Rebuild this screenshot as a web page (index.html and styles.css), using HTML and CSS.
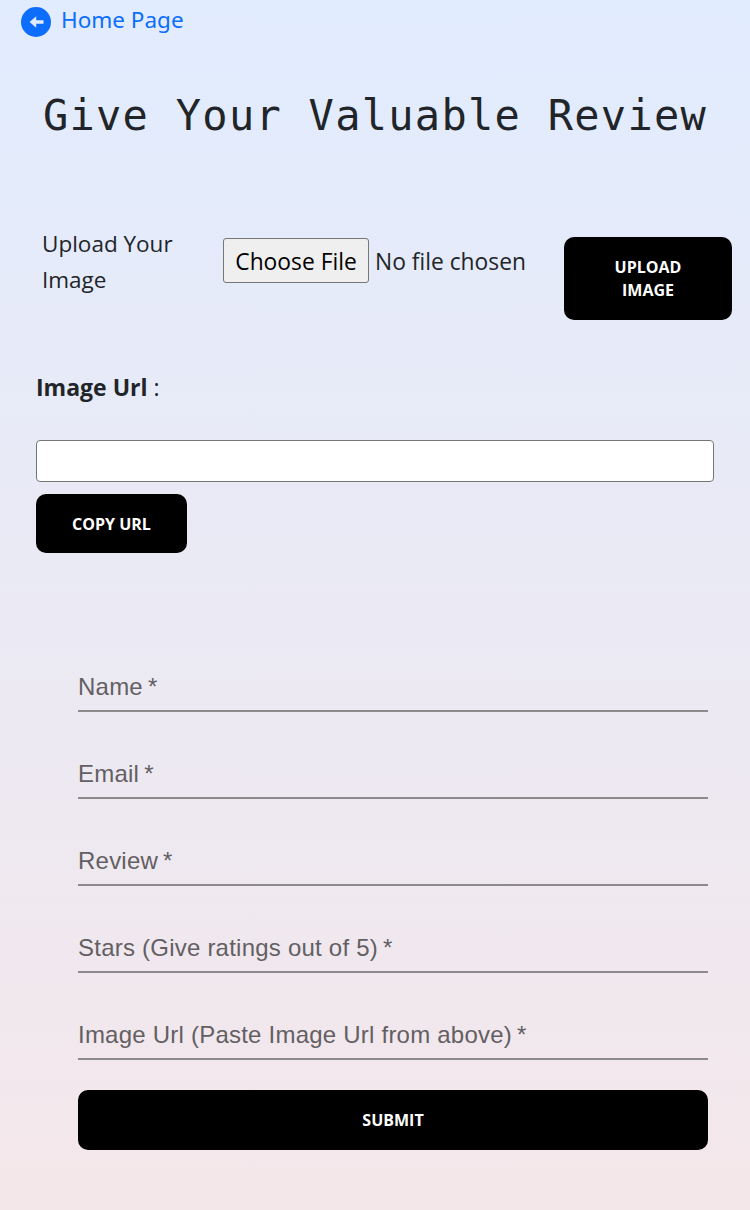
FILE: index.html
```html
<!DOCTYPE html>
<html lang="en">
<head>
    <meta charset="UTF-8">
    <meta name="viewport" content="width=device-width, initial-scale=1.0">
    <title>Give Your Valuable Review</title>
    <link rel="stylesheet" href="styles.css">
</head>
<body>
    <a class="home-link" href="#">
        <svg class="home-icon" viewBox="0 0 16 16" aria-hidden="true">
            <circle class="home-icon-bg" cx="8" cy="8" r="8"/>
            <path class="home-icon-arrow" d="M12 7.1H8.1V4.9L4.6 8l3.5 3.1V8.9H12z"/>
        </svg>
        <span>Home Page</span>
    </a>

    <h1 class="page-title">Give Your Valuable Review</h1>

    <div class="upload-row">
        <label class="upload-label" for="image-file">Upload Your Image</label>
        <input class="upload-input" type="file" id="image-file">
        <button class="btn btn-upload" type="button">Upload Image</button>
    </div>

    <div class="url-section">
        <p class="url-title"><strong>Image Url</strong> :</p>
        <input class="url-input" type="text" id="image-url">
        <button class="btn btn-copy" type="button">Copy Url</button>
    </div>

    <form class="review-form" id="reviewForm">
        <div class="field"><label>Name&thinsp;*</label></div>
        <div class="field"><label>Email&thinsp;*</label></div>
        <div class="field"><label>Review&thinsp;*</label></div>
        <div class="field"><label>Stars (Give ratings out of 5)&thinsp;*</label></div>
        <div class="field"><label>Image Url (Paste Image Url from above)&thinsp;*</label></div>
        <button class="btn btn-submit" type="submit">Submit</button>
    </form>
</body>
</html>
```

FILE: styles.css
```css
/* Review page */
html {
    height: 100%;
}
body {
    font-family: "Open Sans", "Noto Sans", sans-serif;
    color: #212529;
    background: linear-gradient(to bottom, #e1ecfe, #f4e7ea);
    margin: 0;
    min-height: 1210px;
    box-sizing: border-box;
}
.home-link {
    display: flex;
    align-items: flex-start;
    gap: 10px;
    padding: 7px 0 0 21px;
    height: 30px;
    color: #0d6efd;
    font-family: "Noto Sans", sans-serif;
    font-size: 22.5px;
    line-height: 26px;
    text-decoration: none;
}
.home-icon {
    width: 30px;
    height: 30px;
}
.home-icon-bg {
    fill: #0d6efd;
}
.home-icon-arrow {
    fill: #e1ecfe;
}
.page-title {
    margin: 0;
    padding-top: 51px;
    text-align: center;
    font-family: "DejaVu Sans Mono", monospace;
    font-size: 42px;
    font-weight: 400;
    line-height: 56px;
    letter-spacing: 1.28px;
}
.upload-row {
    display: flex;
    align-items: flex-start;
    padding: 93px 18px 0 42px;
}
.upload-label {
    width: 181px;
    flex: none;
    font-size: 22.5px;
    line-height: 36px;
    margin-top: -11px;
}
.upload-input {
    width: 341px;
    flex: none;
    margin-top: 1px;
    font-family: "Open Sans", sans-serif;
    font-size: 22.8px;
    color: #212529;
}
.upload-input::file-selector-button {
    font: inherit;
    height: 45px;
    width: 146px;
    margin-right: 6px;
    padding: 2px 0 0;
    color: #000;
    background: #efefef;
    border: 1px solid #767676;
    border-radius: 3px;
}
.btn {
    display: block;
    font-family: "Open Sans", sans-serif;
    font-weight: 700;
    font-size: 16px;
    line-height: 23px;
    text-transform: uppercase;
    color: #fff;
    background: #000;
    border: none;
    border-radius: 10px;
    padding: 0;
}
.btn-upload {
    width: 168px;
    height: 83px;
    flex: none;
    padding: 0 40px;
}
.url-section {
    padding: 52px 36px 0;
}
.url-title {
    margin: 0;
    font-size: 23px;
    line-height: 30px;
}
.url-input {
    display: block;
    width: 678px;
    height: 42px;
    margin-top: 38px;
    box-sizing: border-box;
    background: #fff;
    border: 1px solid #767676;
    border-radius: 4px;
}
.btn-copy {
    width: 151px;
    height: 59px;
    margin-top: 12px;
    padding-top: 2px;
}
.review-form {
    padding: 73px 42px 0 78px;
}
.field {
    height: 87px;
    box-sizing: border-box;
    display: flex;
    align-items: flex-end;
    border-bottom: 2px solid #8c8a8c;
    padding-bottom: 8px;
}
.field:first-child {
    height: 86px;
}
.field label {
    font-family: "Liberation Sans", sans-serif;
    font-size: 24px;
    line-height: 30px;
    letter-spacing: 0.00938em;
    color: #635f63;
}
.btn-submit {
    width: 630px;
    height: 60px;
    margin-top: 30px;
}
```
